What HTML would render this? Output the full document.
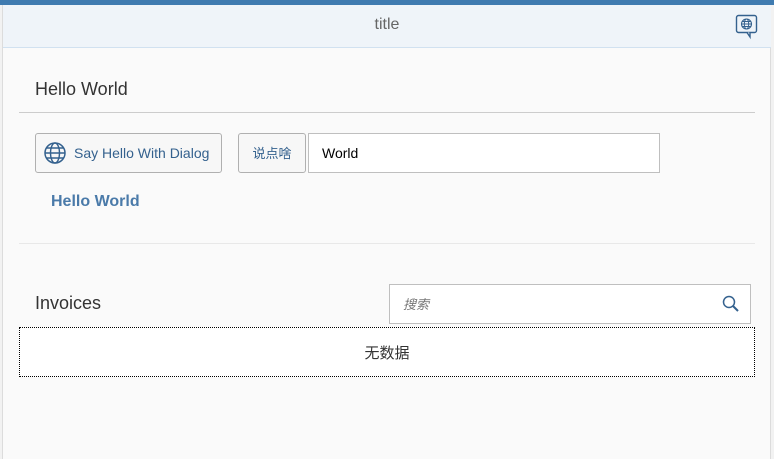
<!DOCTYPE html>
<html><head><meta charset="utf-8"><style>
*{box-sizing:border-box;margin:0;padding:0}
body{width:774px;height:459px;overflow:hidden;background:#f2f2f2;font-family:"Liberation Sans","Noto Sans CJK SC",sans-serif;position:relative}
.page{position:absolute;left:2px;top:0;width:769px;height:459px;background:#fafafa;border-left:1px solid #dcdcdc;border-right:1px solid #dcdcdc}
.abs{position:absolute}
</style></head><body>
<div class="page"></div>
<div class="abs" style="left:0;top:0;width:774px;height:5px;background:#3f7bb0"></div>
<div class="abs" style="left:3px;top:5px;width:768px;height:43px;background:#eff4f9;border-bottom:1px solid #d1e1f0"></div>
<div class="abs" style="left:0;top:16px;width:774px;text-align:center;font-size:16px;color:#666;">title</div>
<svg class="abs" style="left:735px;top:14px" width="24" height="26" viewBox="0 0 24 26">
<rect x="1.5" y="1.5" width="20" height="17" rx="2" fill="none" stroke="#34618e" stroke-width="1.4"/>
<path d="M12 18.5 L15 23 L15 18.5" fill="#eff4f9" stroke="#34618e" stroke-width="1.4"/>
<circle cx="11.5" cy="10" r="5" fill="none" stroke="#34618e" stroke-width="1.1"/>
<ellipse cx="11.5" cy="10" rx="2.2" ry="5" fill="none" stroke="#34618e" stroke-width="1"/>
<path d="M6.5 10H16.5M7.5 7.5H15.5M7.5 12.5H15.5" stroke="#34618e" stroke-width="1"/>
</svg>
<div class="abs" style="left:35px;top:79px;font-size:18px;color:#333">Hello World</div>
<div class="abs" style="left:19px;top:112px;width:736px;height:1px;background:#ccc"></div>
<div class="abs" style="left:35px;top:133px;width:187px;height:40px;border:1px solid #b0b0b0;border-radius:3px;background:#f7f7f7"></div>
<svg class="abs" style="left:43px;top:141px" width="24" height="24" viewBox="0 0 24 24">
<circle cx="12" cy="12" r="10" fill="none" stroke="#34618e" stroke-width="1.5"/>
<ellipse cx="12" cy="12" rx="4.5" ry="10" fill="none" stroke="#34618e" stroke-width="1.4"/>
<path d="M2 12H22M3.5 7H20.5M3.5 17H20.5" stroke="#34618e" stroke-width="1.4"/>
</svg>
<div class="abs" style="left:74px;top:145px;font-size:14px;color:#34618e">Say Hello With Dialog</div>
<div class="abs" style="left:238px;top:133px;width:68px;height:40px;border:1px solid #b0b0b0;border-radius:3px;background:#f7f7f7;text-align:center;line-height:40px;font-size:13px;color:#34618e">说点啥</div>
<div class="abs" style="left:308px;top:133px;width:352px;height:40px;border:1px solid #bfbfbf;background:#fff;padding-left:13px;line-height:38px;font-size:14px;color:#000">World</div>
<div class="abs" style="left:51px;top:193px;font-size:16px;font-weight:bold;color:#4a7aa9">Hello World</div>
<div class="abs" style="left:19px;top:243px;width:736px;height:1px;background:#e8e8e8"></div>
<div class="abs" style="left:35px;top:293px;font-size:18px;color:#333">Invoices</div>
<div class="abs" style="left:389px;top:284px;width:362px;height:40px;border:1px solid #bfbfbf;background:#fff;padding-left:13px;line-height:40px;font-size:13px;color:#777;font-style:italic">搜索</div>
<svg class="abs" style="left:722px;top:295px" width="18" height="18" viewBox="0 0 18 18">
<circle cx="7" cy="7" r="5.5" fill="none" stroke="#34618e" stroke-width="1.5"/>
<path d="M11 11L16 16" stroke="#34618e" stroke-width="2"/>
</svg>
<div class="abs" style="left:19px;top:327px;width:736px;height:50px;border:1px dotted #000;background:#fff;text-align:center;line-height:51px;font-size:15px;color:#333">无数据</div>
</body></html>
